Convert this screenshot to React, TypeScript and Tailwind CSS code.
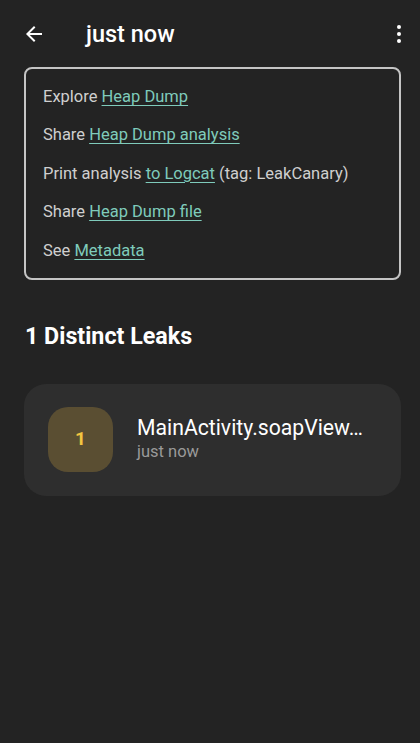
import React from 'react';

const actions = [
  { pre: 'Explore ', link: 'Heap Dump', post: '' },
  { pre: 'Share ', link: 'Heap Dump analysis', post: '' },
  { pre: 'Print analysis ', link: 'to Logcat', post: ' (tag: LeakCanary)' },
  { pre: 'Share ', link: 'Heap Dump file', post: '' },
  { pre: 'See ', link: 'Metadata', post: '' },
];

const App: React.FC = () => {
  return (
    <div
      className="w-[420px] h-[743px] bg-[#232323] text-white overflow-hidden"
      style={{ fontFamily: 'Roboto, "Noto Sans", sans-serif' }}
    >
      {/* top bar */}
      <div className="h-[67px] flex items-center pl-[22px] pr-[9px]">
        <svg width="24" height="24" viewBox="0 0 24 24" className="text-white">
          <path d="M20 11H7.83l5.59-5.59L12 4l-8 8 8 8 1.41-1.41L7.83 13H20v-2z" fill="currentColor" />
        </svg>
        <div className="ml-[40px] text-[23.5px] font-medium flex-1 mt-[2px]">just now</div>
        <svg width="24" height="24" viewBox="0 0 24 24" className="text-white">
          <circle cx="12" cy="5" r="2" fill="currentColor" />
          <circle cx="12" cy="12" r="2" fill="currentColor" />
          <circle cx="12" cy="19" r="2" fill="currentColor" />
        </svg>
      </div>

      {/* actions box */}
      <div className="ml-[24px] mr-[19px] border-2 border-[#c4c4c4] rounded-[8px] pt-[9px] pb-[7px] px-[17px]">
        {actions.map((a, i) => (
          <div key={i} className="h-[38.5px] flex items-center text-[16.5px] text-[#cfcfcf]">
            <span className="whitespace-pre">{a.pre}</span>
            <span className="text-[#7fcbbb] underline underline-offset-[3px]">{a.link}</span>
            <span className="whitespace-pre">{a.post}</span>
          </div>
        ))}
      </div>

      <div className="px-[25px] mt-[41px] text-[23.25px] font-bold leading-[30px]">1 Distinct Leaks</div>

      {/* leak row */}
      <div className="ml-[24px] mr-[19px] mt-[33px] h-[112px] rounded-[22px] bg-[#2e2e2e] flex items-center px-[24px]">
        <div className="w-[65px] h-[65px] rounded-[20px] bg-[#5a4e32] flex items-center justify-center text-[#f3c540] text-[19px] font-bold">
          1
        </div>
        <div className="ml-[24px] flex flex-col -mt-[2px]">
          <div className="text-[21.2px] leading-[26px] text-white">MainActivity.soapView…</div>
          <div className="text-[16.5px] leading-[22px] text-[#9a9a9a]">just now</div>
        </div>
      </div>
    </div>
  );
};

export default App;
